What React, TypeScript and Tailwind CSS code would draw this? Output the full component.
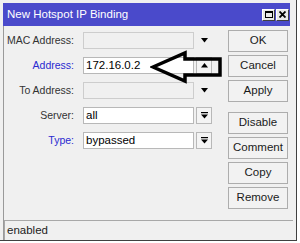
import React from 'react';

interface FieldRow {
  label: string;
  value?: string;
  blue?: boolean;
  kind: 'disabled' | 'input';
  trail: 'triangle' | 'up' | 'combo';
}

const rows: FieldRow[] = [
  { label: 'MAC Address:', kind: 'disabled', trail: 'triangle' },
  { label: 'Address:', value: '172.16.0.2', blue: true, kind: 'input', trail: 'up' },
  { label: 'To Address:', kind: 'disabled', trail: 'triangle' },
  { label: 'Server:', value: 'all', kind: 'input', trail: 'combo' },
  { label: 'Type:', value: 'bypassed', blue: true, kind: 'input', trail: 'combo' },
];

const buttons = ['OK', 'Cancel', 'Apply', 'Disable', 'Comment', 'Copy', 'Remove'];

const Trail = ({ trail }: { trail: FieldRow['trail'] }) => {
  if (trail === 'triangle') {
    return (
      <svg width="7" height="5" viewBox="0 0 7 5" className="ml-[7px]">
        <polygon points="0,0 7,0 3.5,4.5" fill="#000" />
      </svg>
    );
  }
  return (
    <div className="ml-[2px] w-[16px] h-[17px] border border-[#b8b8b8] bg-[#f4f4f4] flex items-center justify-center">
      {trail === 'up' ? (
        <svg width="7" height="5" viewBox="0 0 7 5">
          <polygon points="0,4.5 7,4.5 3.5,0" fill="#000" />
        </svg>
      ) : (
        <svg width="7" height="7" viewBox="0 0 7 7">
          <rect x="0" y="0" width="7" height="1.2" fill="#000" />
          <polygon points="0,2.5 7,2.5 3.5,6.5" fill="#000" />
        </svg>
      )}
    </div>
  );
};

export default function App() {
  return (
    <div className="w-[300px] h-[243px] bg-white font-['Liberation_Sans',Arial,sans-serif]">
      <div className="relative w-[297px] h-[241px] bg-[#f0f0f0] border-r border-b border-[#404040] pl-[3px] pr-[6px] pt-[3px] flex flex-col">
        {/* Title bar */}
        <div className="h-[23px] bg-[#4a4acb] flex items-center pl-[4px] pr-[1px]">
          <span className="text-white text-[11.5px] flex-1">New Hotspot IP Binding</span>
          <div className="flex gap-[1px]">
            <div className="w-[13px] h-[12px] bg-[#e8e8e8] border border-t-white border-l-white border-r-[#404040] border-b-[#404040] flex items-center justify-center">
              <div className="w-[8px] h-[7px] border border-black border-t-2" />
            </div>
            <div className="w-[13px] h-[12px] bg-[#e8e8e8] border border-t-white border-l-white border-r-[#404040] border-b-[#404040] flex items-center justify-center">
              <svg width="7" height="7" viewBox="0 0 7 7">
                <path d="M0.5 0.5 L6.5 6.5 M6.5 0.5 L0.5 6.5" stroke="#000" strokeWidth="1.8" />
              </svg>
            </div>
          </div>
        </div>

        {/* Body */}
        <div className="flex-1 flex flex-col border-l border-[#9a9a9a]">
          <div className="flex-1 flex">
            <div className="w-[224px] pt-[6px] flex flex-col gap-[8px]">
              {rows.map((r) => (
                <div key={r.label} className="h-[17px] flex items-center">
                  <span
                    className={`w-[70px] text-right text-[10.5px] ${r.blue ? 'text-[#2a2ad0]' : 'text-[#333333]'}`}
                  >
                    {r.label}
                  </span>
                  <div
                    className={`ml-[9px] w-[111px] h-[17px] border flex items-center pl-[2px] text-[11.5px] text-black ${
                      r.kind === 'disabled' ? 'bg-[#f0f0f0] border-[#cdcdcd]' : 'bg-white border-[#b8b8b8]'
                    }`}
                  >
                    {r.value}
                  </div>
                  <Trail trail={r.trail} />
                </div>
              ))}
            </div>
            <div className="w-[60px] pt-[4px] flex flex-col gap-[3px]">
              {buttons.map((b) => (
                <div
                  key={b}
                  className={`h-[22px] border border-[#adadad] bg-[#f2f2f2] flex items-center justify-center text-[11.5px] text-[#1a1a1a] ${
                    b === 'Disable' ? 'mt-[7px]' : ''
                  }`}
                >
                  {b}
                </div>
              ))}
            </div>
          </div>

          {/* Status bar */}
          <div className="h-[20px] mr-[-3px] border-t border-l border-[#a8a8a8] flex items-center pl-[2px] text-[11.5px] text-[#222]">
            enabled
          </div>
        </div>

        {/* Annotation arrow */}
        <svg width="76" height="34" viewBox="0 0 76 34" className="absolute left-[150px] top-[50px]">
          <polygon
            points="3,17 35,3 35,9 70,9 70,25 35,25 35,31"
            fill="none"
            stroke="#000"
            strokeWidth="3.5"
            strokeLinejoin="miter"
          />
        </svg>
      </div>
    </div>
  );
}
